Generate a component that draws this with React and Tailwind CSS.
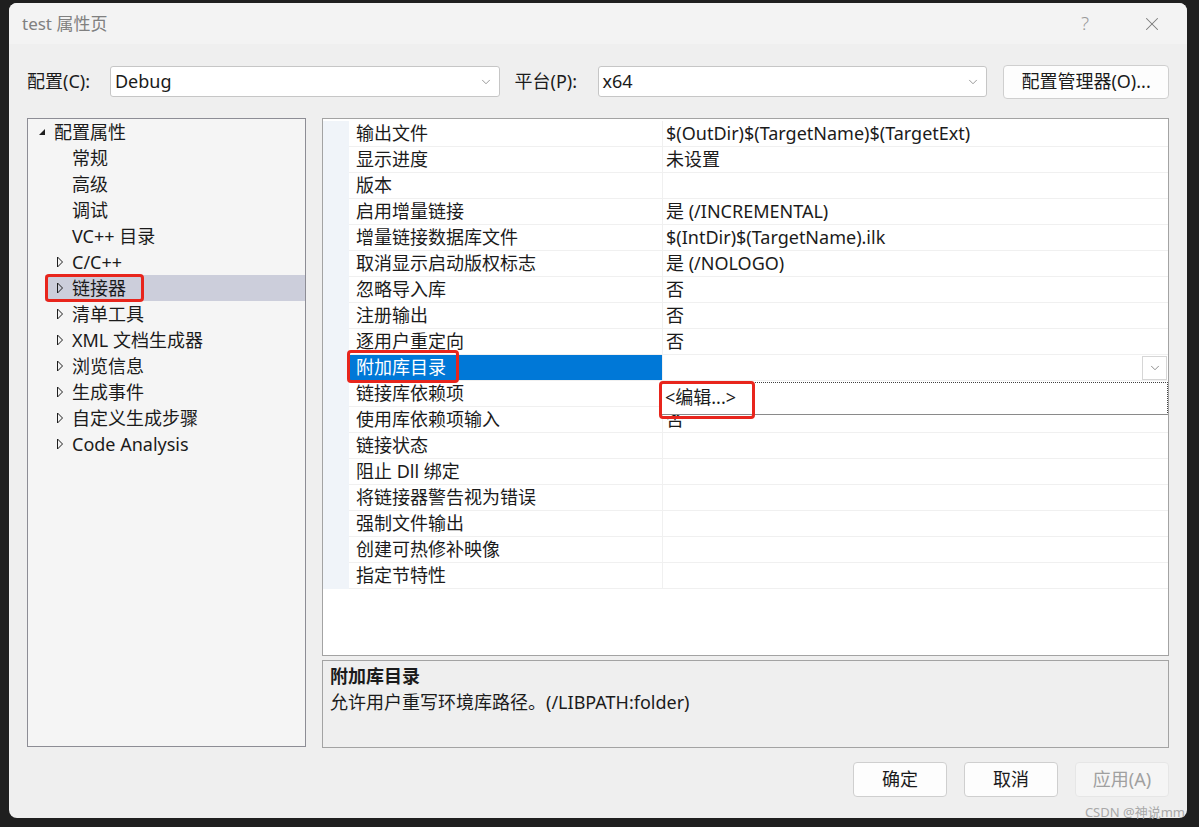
import { ChevronDown, X } from 'lucide-react';

const tree = [
  { label: '配置属性', kind: 'open' },
  { label: '常规' },
  { label: '高级' },
  { label: '调试' },
  { label: 'VC++ 目录' },
  { label: 'C/C++', kind: 'closed' },
  { label: '链接器', kind: 'closed', selected: true },
  { label: '清单工具', kind: 'closed' },
  { label: 'XML 文档生成器', kind: 'closed' },
  { label: '浏览信息', kind: 'closed' },
  { label: '生成事件', kind: 'closed' },
  { label: '自定义生成步骤', kind: 'closed' },
  { label: 'Code Analysis', kind: 'closed' },
];

const props = [
  ['输出文件', '$(OutDir)$(TargetName)$(TargetExt)'],
  ['显示进度', '未设置'],
  ['版本', ''],
  ['启用增量链接', '是 (/INCREMENTAL)'],
  ['增量链接数据库文件', '$(IntDir)$(TargetName).ilk'],
  ['取消显示启动版权标志', '是 (/NOLOGO)'],
  ['忽略导入库', '否'],
  ['注册输出', '否'],
  ['逐用户重定向', '否'],
  ['附加库目录', '', 'selected'],
  ['链接库依赖项', ''],
  ['使用库依赖项输入', '否'],
  ['链接状态', ''],
  ['阻止 Dll 绑定', ''],
  ['将链接器警告视为错误', ''],
  ['强制文件输出', ''],
  ['创建可热修补映像', ''],
  ['指定节特性', ''],
];

function Expander({ kind }) {
  if (kind === 'open') {
    return (
      <svg width="8" height="8" viewBox="0 0 8 8" className="shrink-0">
        <path d="M7 1 L7 7 L1 7 Z" fill="#1e1e1e" />
      </svg>
    );
  }
  return (
    <svg width="8" height="12" viewBox="0 0 8 12" className="shrink-0">
      <path d="M1.5 1 L6.5 6 L1.5 11 Z" fill="none" stroke="#1e1e1e" strokeWidth="1" />
    </svg>
  );
}

function Select({ value, className }) {
  return (
    <div className={`h-[31px] bg-white border border-[#c6c6c6] rounded-[3px] flex items-center justify-between pl-[4px] pr-[6px] ${className}`}>
      <span className="text-[18px] text-[#1b1b1b]">{value}</span>
      <ChevronDown size={14} strokeWidth={1.2} className="text-[#707070]" />
    </div>
  );
}

function Btn({ children, disabled }) {
  return (
    <div
      className={`w-[94px] h-[35px] rounded-[4px] border flex items-center justify-center text-[18px] ${
        disabled ? 'bg-[#f5f5f5] border-[#e6e6e6] text-[#a0a0a0]' : 'bg-[#fdfdfd] border-[#cfcfcf] text-[#1b1b1b]'
      }`}
    >
      {children}
    </div>
  );
}

export default function App() {
  return (
    <div className="w-[1199px] h-[827px] bg-[#1f1f1f] pl-[9px] pt-[3px] overflow-hidden relative font-['Noto_Sans','Noto_Sans_CJK_SC',sans-serif]">
      <div className="w-[1178px] h-[815px] bg-[#efefef] rounded-[8px] overflow-hidden relative flex flex-col">
        {/* title bar */}
        <div className="h-[41px] bg-[#f3f3f3] flex items-center pl-[13px] pr-[24px]">
          <span className="text-[17px] text-[#808080]">test 属性页</span>
          <span className="ml-auto text-[19px] text-[#9a9a9a] font-light">?</span>
          <X size={22} strokeWidth={1.1} className="ml-[52px] text-[#7a7a7a]" />
        </div>

        <div className="flex-1 px-[18px] pt-[21px] flex flex-col">
          {/* config row */}
          <div className="flex items-center h-[33px]">
            <span className="text-[18px] text-[#1b1b1b] w-[83px]">配置(C):</span>
            <Select value="Debug" className="w-[390px]" />
            <span className="text-[18px] text-[#1b1b1b] ml-[15px] w-[83px]">平台(P):</span>
            <Select value="x64" className="w-[390px]" />
            <div className="ml-[16px] w-[166px] h-[34px] bg-[#fdfdfd] border border-[#cfcfcf] rounded-[4px] flex items-center justify-center text-[18px] text-[#1b1b1b]">
              配置管理器(O)...
            </div>
          </div>

          <div className="flex mt-[20px] gap-[16px]">
            {/* tree */}
            <div className="w-[279px] h-[629px] bg-[#f5f5f5] border border-[#8d8d95] relative">
              {tree.map((t, i) => (
                <div
                  key={i}
                  className={`h-[26px] flex items-center text-[18px] text-[#1b1b1b] ${
                    t.kind === 'open' ? 'pl-[10px]' : t.selected ? 'bg-[#cccedb] ml-[17px] pl-[11px]' : 'pl-[28px]'
                  }`}
                >
                  {t.kind === 'open' ? (
                    <span className="w-[16px] flex items-center"><Expander kind="open" /></span>
                  ) : (
                    <span className="w-[16px] flex items-center">{t.kind ? <Expander kind="closed" /> : null}</span>
                  )}
                  <span>{t.label}</span>
                </div>
              ))}
              <div className="absolute left-[17px] top-[155px] w-[99px] h-[28px] border-[3px] border-[#e8251c] rounded-[4px]" />
            </div>

            {/* right side */}
            <div className="flex-1 flex flex-col">
              <div className="h-[538px] bg-white border border-[#a3a3a3] relative pt-[2px]">
                {props.map(([name, value, sel], i) => (
                  <div key={i} className="h-[26px] flex">
                    <div className="w-[26px] bg-[#f0f4f9]" />
                    <div
                      className={`w-[313px] flex items-center pl-[7px] text-[18px] border-b border-[#f0f0f0] ${
                        sel ? 'bg-[#0078d7] text-white border-[#0078d7]' : 'text-[#1b1b1b]'
                      }`}
                    >
                      {name}
                    </div>
                    <div className="flex-1 flex items-center pl-[3px] text-[18px] text-[#1b1b1b] border-b border-l border-[#f0f0f0] relative">
                      {value}
                      {sel && (
                        <div className="absolute right-[1px] top-[1px] w-[25px] h-[24px] border border-[#d6d6d6] bg-white flex items-center justify-center">
                          <ChevronDown size={14} strokeWidth={1.2} className="text-[#606060]" />
                        </div>
                      )}
                    </div>
                  </div>
                ))}
                {/* inline editor */}
                <div className="absolute left-[339px] top-[263px] right-0 h-[33px] bg-white border-t border-r border-dotted border-[#404040] flex items-start pt-[1px] pl-[3px] text-[18px] text-[#1b1b1b]">
                  <span>&lt;编辑...&gt;</span>
                  <div className="absolute left-0 right-[-1px] bottom-0 h-[1px] bg-[#8a8a8a]" />
                </div>
                {/* annotations */}
                <div className="absolute left-[24px] top-[231px] w-[112px] h-[33px] border-[3px] border-[#e8251c] rounded-[4px]" />
                <div className="absolute left-[336px] top-[262px] w-[96px] h-[38px] border-[3px] border-[#e8251c] rounded-[4px]" />
              </div>

              <div className="mt-[4px] h-[88px] bg-[#efefef] border border-[#a3a3a3] px-[7px] pt-[2px]">
                <div className="text-[18px] font-bold text-[#1b1b1b] leading-[26px]">附加库目录</div>
                <div className="text-[18px] text-[#1b1b1b] leading-[26px]">允许用户重写环境库路径。(/LIBPATH:folder)</div>
              </div>
            </div>
          </div>

          {/* buttons */}
          <div className="flex justify-end gap-[17px] mt-[14px]">
            <Btn>确定</Btn>
            <Btn>取消</Btn>
            <Btn disabled>应用(A)</Btn>
          </div>
        </div>
      </div>
      <div className="absolute right-[14px] bottom-[5px] text-[13px] text-[#a8a8a8]">CSDN @神说mm</div>
    </div>
  );
}
